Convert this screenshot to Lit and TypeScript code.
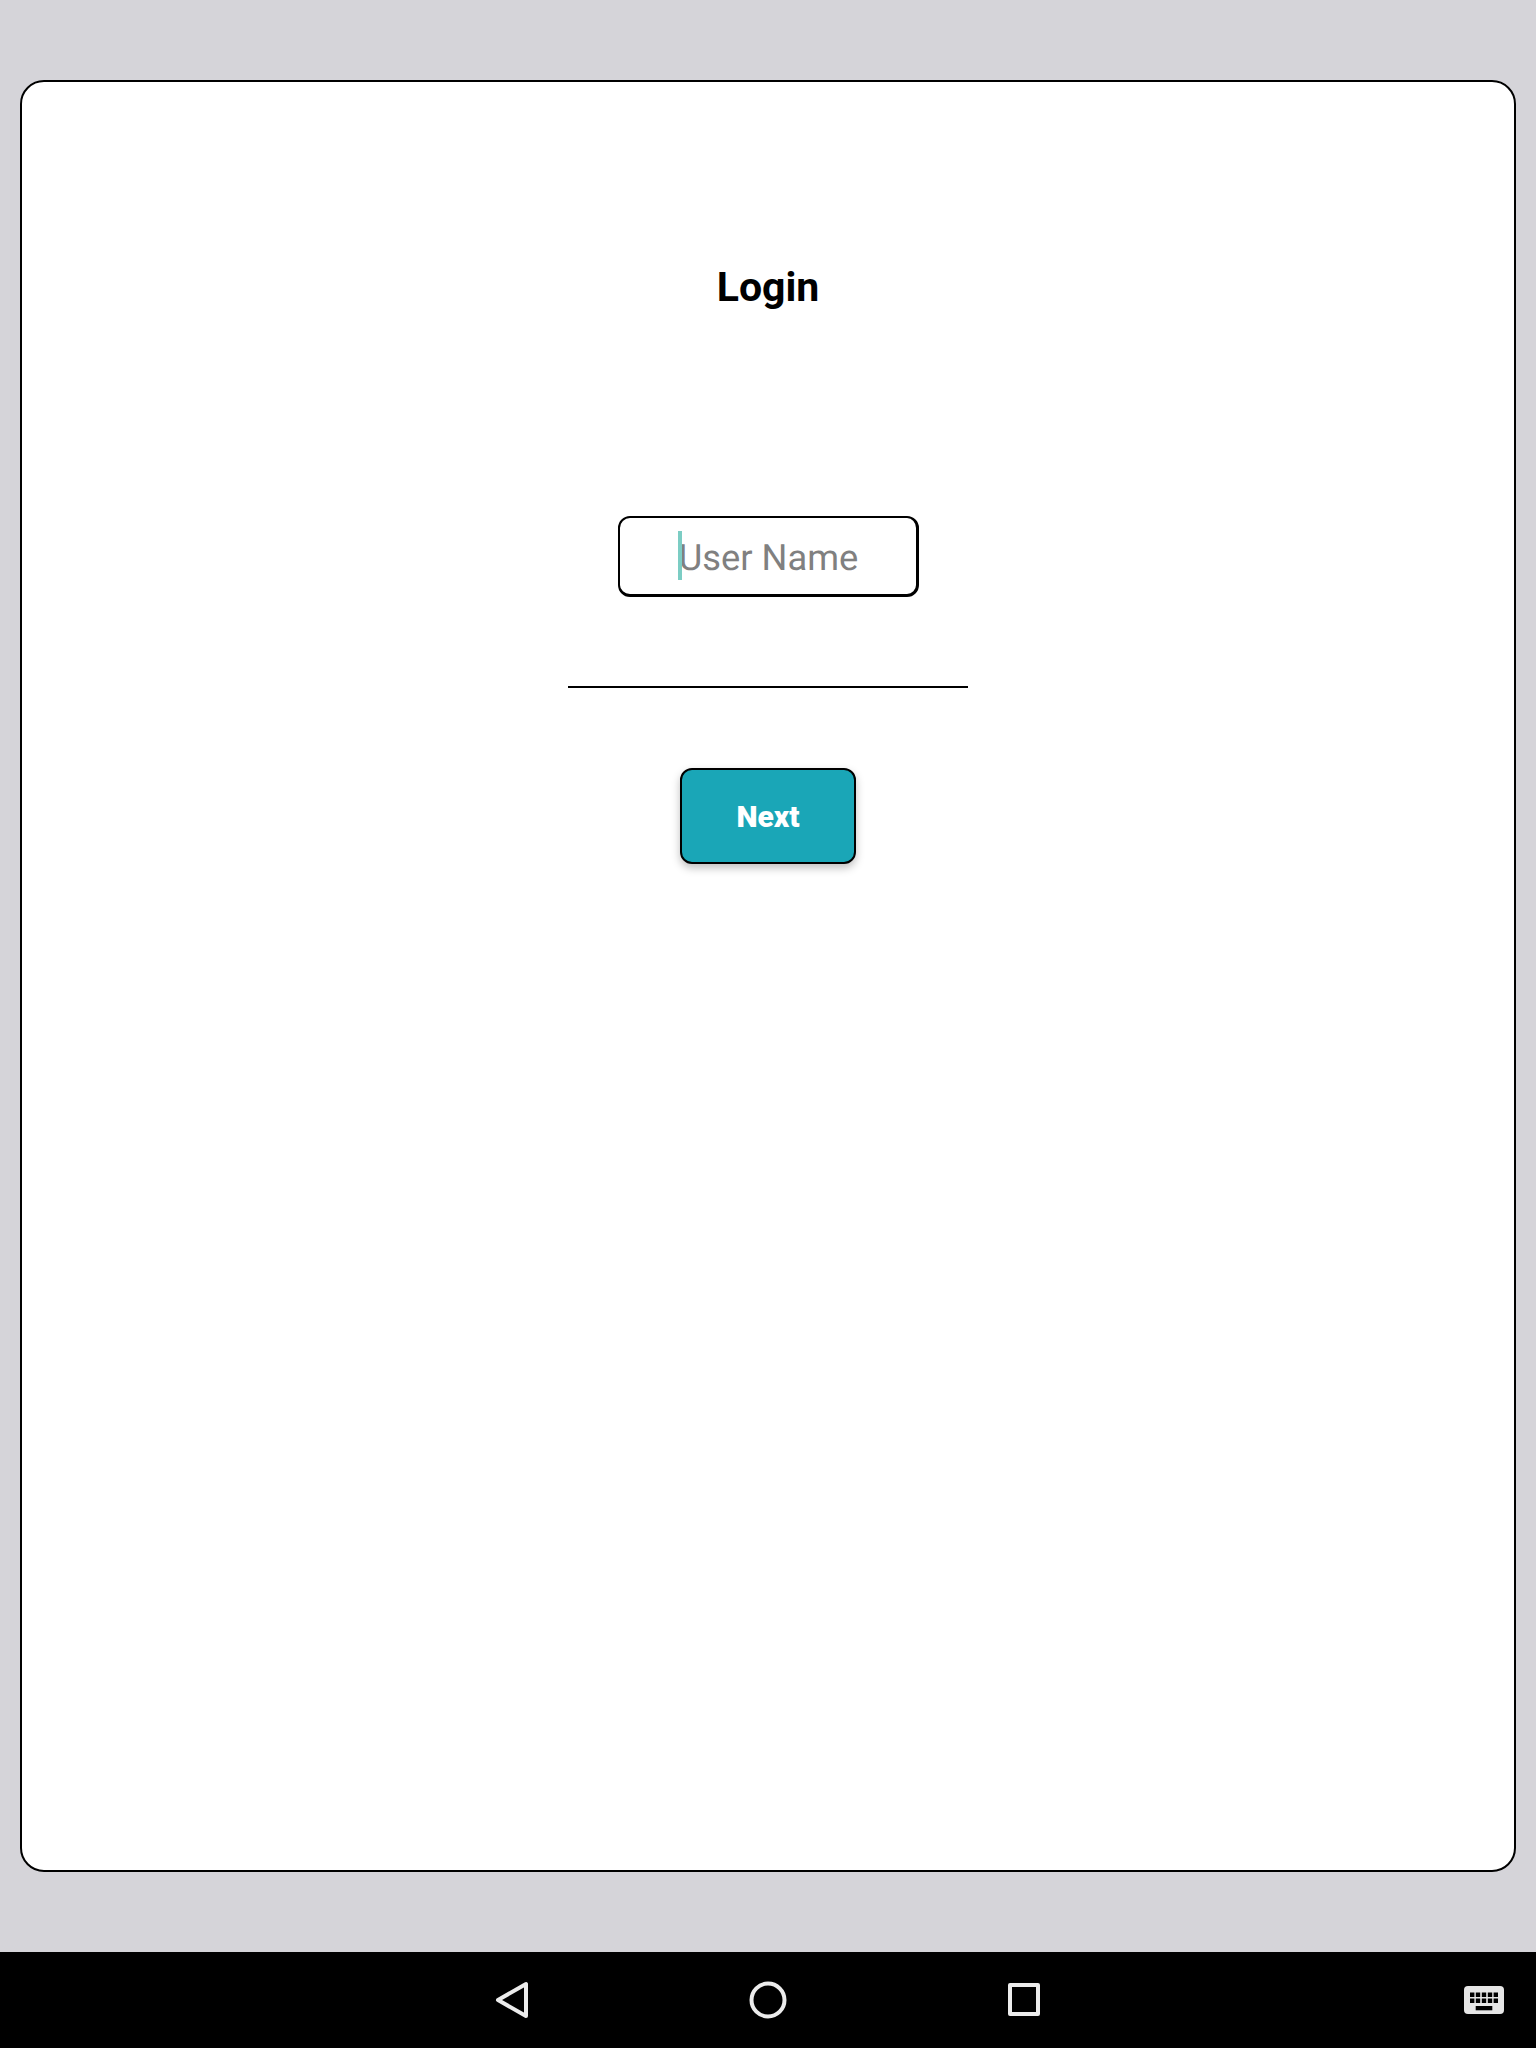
import { LitElement, html, css } from "lit";
import { customElement } from "lit/decorators.js";

@customElement("app-root")
export class AppRoot extends LitElement {
  static styles = css`
    :host {
      display: flex;
      flex-direction: column;
      width: 1536px;
      height: 2048px;
      background: #d5d4d9;
      font-family: Roboto, "Liberation Sans", sans-serif;
    }
    .stage {
      flex: 1;
      min-height: 0;
      padding: 80px 20px 80px;
      box-sizing: border-box;
      display: flex;
    }
    .card {
      flex: 1;
      box-sizing: border-box;
      background: #fff;
      border: 2px solid #000;
      border-radius: 24px;
      display: flex;
      flex-direction: column;
      align-items: center;
    }
    h1 {
      margin: 180px 0 0;
      height: 50px;
      line-height: 50px;
      font-size: 41px;
      font-weight: 700;
      color: #000;
    }
    .field {
      margin: 204px 0 0 1px;
      width: 301px;
      height: 81px;
      box-sizing: border-box;
      border: 2px solid #000;
      border-right-width: 3px;
      border-bottom-width: 3px;
      border-radius: 12px;
      display: flex;
      align-items: center;
      justify-content: center;
      padding-left: 1px;
    }
    .ph {
      position: relative;
      font-size: 36.3px;
      line-height: 50px;
      color: #808080;
      text-rendering: geometricPrecision;
      top: 2px;
    }
    .caret {
      position: absolute;
      left: -1px;
      top: -2px;
      width: 4px;
      height: 49px;
      background: #7ccdc4;
    }
    .line {
      margin-top: 89px;
      width: 400px;
      height: 2px;
      background: #000;
    }
    .btn {
      margin-top: 80px;
      width: 176px;
      height: 96px;
      box-sizing: border-box;
      background: #1aa6b7;
      border: 2px solid #000;
      border-radius: 12px;
      box-shadow: 0 4px 8px rgba(0, 0, 0, 0.25);
      color: #fff;
      font: 900 30px Roboto, "Liberation Sans", sans-serif;
      padding: 0;
    }
    .nav {
      height: 96px;
      flex: none;
      background: #000;
      position: relative;
      display: flex;
      align-items: center;
      justify-content: center;
      gap: 216px;
    }
    .nav svg { display: block; }
    .kbd {
      position: absolute;
      left: 1464px;
      top: 34px;
    }
  `;

  render() {
    return html`
      <div class="stage">
        <div class="card">
          <h1>Login</h1>
          <div class="field">
            <span class="ph"><span class="caret"></span>User Name</span>
          </div>
          <div class="line"></div>
          <button class="btn">Next</button>
        </div>
      </div>
      <div class="nav">
        <svg width="40" height="40" viewBox="0 0 40 40" fill="none" stroke="#ececec" stroke-width="4" stroke-linejoin="round">
          <path d="M34 4 V36 L6 20 Z" />
        </svg>
        <svg width="40" height="40" viewBox="0 0 40 40" fill="none" stroke="#ececec" stroke-width="4">
          <circle cx="20" cy="20" r="16.5" />
        </svg>
        <svg width="40" height="40" viewBox="0 0 40 40" fill="none" stroke="#ececec" stroke-width="4" stroke-linejoin="round">
          <rect x="6" y="5" width="28" height="29" />
        </svg>
        <svg class="kbd" width="40" height="28" viewBox="0 0 40 28">
          <rect width="40" height="28" rx="4" fill="#e6e6e6" />
          <g fill="#000">
            <rect x="6" y="6.5" width="4.4" height="4.5" /><rect x="11.8" y="6.5" width="4.4" height="4.5" /><rect x="17.8" y="6.5" width="4.4" height="4.5" /><rect x="23.8" y="6.5" width="4.4" height="4.5" /><rect x="29.6" y="6.5" width="4.4" height="4.5" />
            <rect x="6" y="12.5" width="4.4" height="4.5" /><rect x="11.8" y="12.5" width="4.4" height="4.5" /><rect x="17.8" y="12.5" width="4.4" height="4.5" /><rect x="23.8" y="12.5" width="4.4" height="4.5" /><rect x="29.6" y="12.5" width="4.4" height="4.5" />
            <rect x="11.7" y="20" width="16.6" height="4.3" />
          </g>
        </svg>
      </div>
    `;
  }
}
